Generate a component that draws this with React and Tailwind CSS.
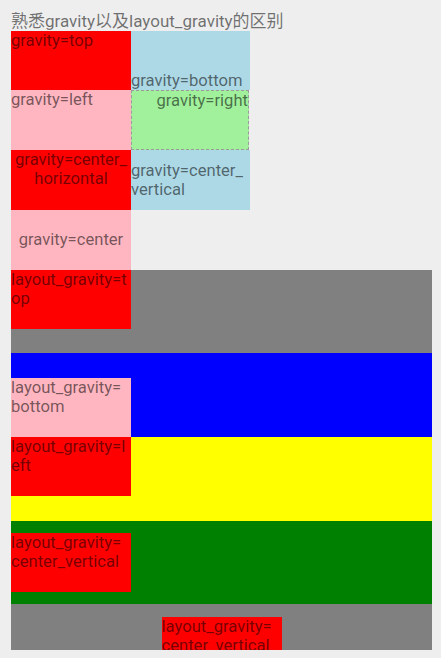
// Gravity vs layout_gravity demo screen
import React from 'react';

const font = { fontFamily: 'Roboto, "Noto Sans CJK SC", sans-serif' };

const Cell = ({ className = '', children }) => (
  <div className={`flex overflow-hidden text-[16.6px] leading-[19.4px] text-black/55 ${className}`}>
    {children}
  </div>
);

const Lines = ({ lines, className = '' }) => (
  <div className={className}>
    {lines.map((l) => (
      <div key={l} className="whitespace-nowrap">{l}</div>
    ))}
  </div>
);

const Strip = ({ color, align, height, box, lines, center }) => (
  <div className={`flex ${align} ${center ? 'justify-center' : ''} ${color} ${height}`}>
    <div className={`w-[120px] h-[59px] shrink-0 overflow-hidden ${box} text-[16.6px] leading-[19.4px] text-black/55`}>
      <Lines lines={lines} />
    </div>
  </div>
);

export default function App() {
  return (
    <div className="h-[658px] overflow-hidden bg-[#eeeeee] pl-[11px] pr-[9px]" style={font}>
      <div className="h-[650px] overflow-hidden">
        <div className="pt-[11px] h-[31px] text-[17px] leading-[20px] text-black/55 whitespace-nowrap">
          熟悉gravity以及layout_gravity的区别
        </div>

        {/* gravity grid */}
        <div className="grid grid-cols-[120px_119px] grid-rows-[59px_60px_60px_60px]">
          <Cell className="bg-[#ff0000] items-start">
            <Lines lines={['gravity=top']} />
          </Cell>
          <Cell className="bg-[#add8e6] items-end">
            <Lines lines={['gravity=bottom']} />
          </Cell>
          <Cell className="bg-[#ffb6c1] items-start">
            <Lines lines={['gravity=left']} />
          </Cell>
          <Cell className="bg-[#a0f09c] border border-dashed border-[#9a9a9a] items-start justify-end mr-[1px]">
            <Lines lines={['gravity=right']} className="text-right" />
          </Cell>
          <Cell className="bg-[#ff0000] items-start justify-center">
            <Lines lines={['gravity=center_', 'horizontal']} className="text-center" />
          </Cell>
          <Cell className="bg-[#add8e6] items-center">
            <Lines lines={['gravity=center_', 'vertical']} />
          </Cell>
          <Cell className="bg-[#ffb6c1] items-center justify-center">
            <Lines lines={['gravity=center']} className="text-center" />
          </Cell>
          <div />
        </div>

        {/* layout_gravity strips */}
        <Strip color="bg-[#808080]" align="items-start" height="h-[83px]" box="bg-[#ff0000]" lines={['layout_gravity=t', 'op']} />
        <Strip color="bg-[#0000ff]" align="items-end" height="h-[84px]" box="bg-[#ffb6c1]" lines={['layout_gravity=', 'bottom']} />
        <Strip color="bg-[#ffff00]" align="items-start" height="h-[84px]" box="bg-[#ff0000]" lines={['layout_gravity=l', 'eft']} />
        <Strip color="bg-[#008000]" align="items-center" height="h-[83px]" box="bg-[#ff0000]" lines={['layout_gravity=', 'center_vertical']} />
        <Strip color="bg-[#808080]" align="items-center" height="h-[84px]" box="bg-[#ff0000]" lines={['layout_gravity=', 'center_vertical']} center />
      </div>
    </div>
  );
}
